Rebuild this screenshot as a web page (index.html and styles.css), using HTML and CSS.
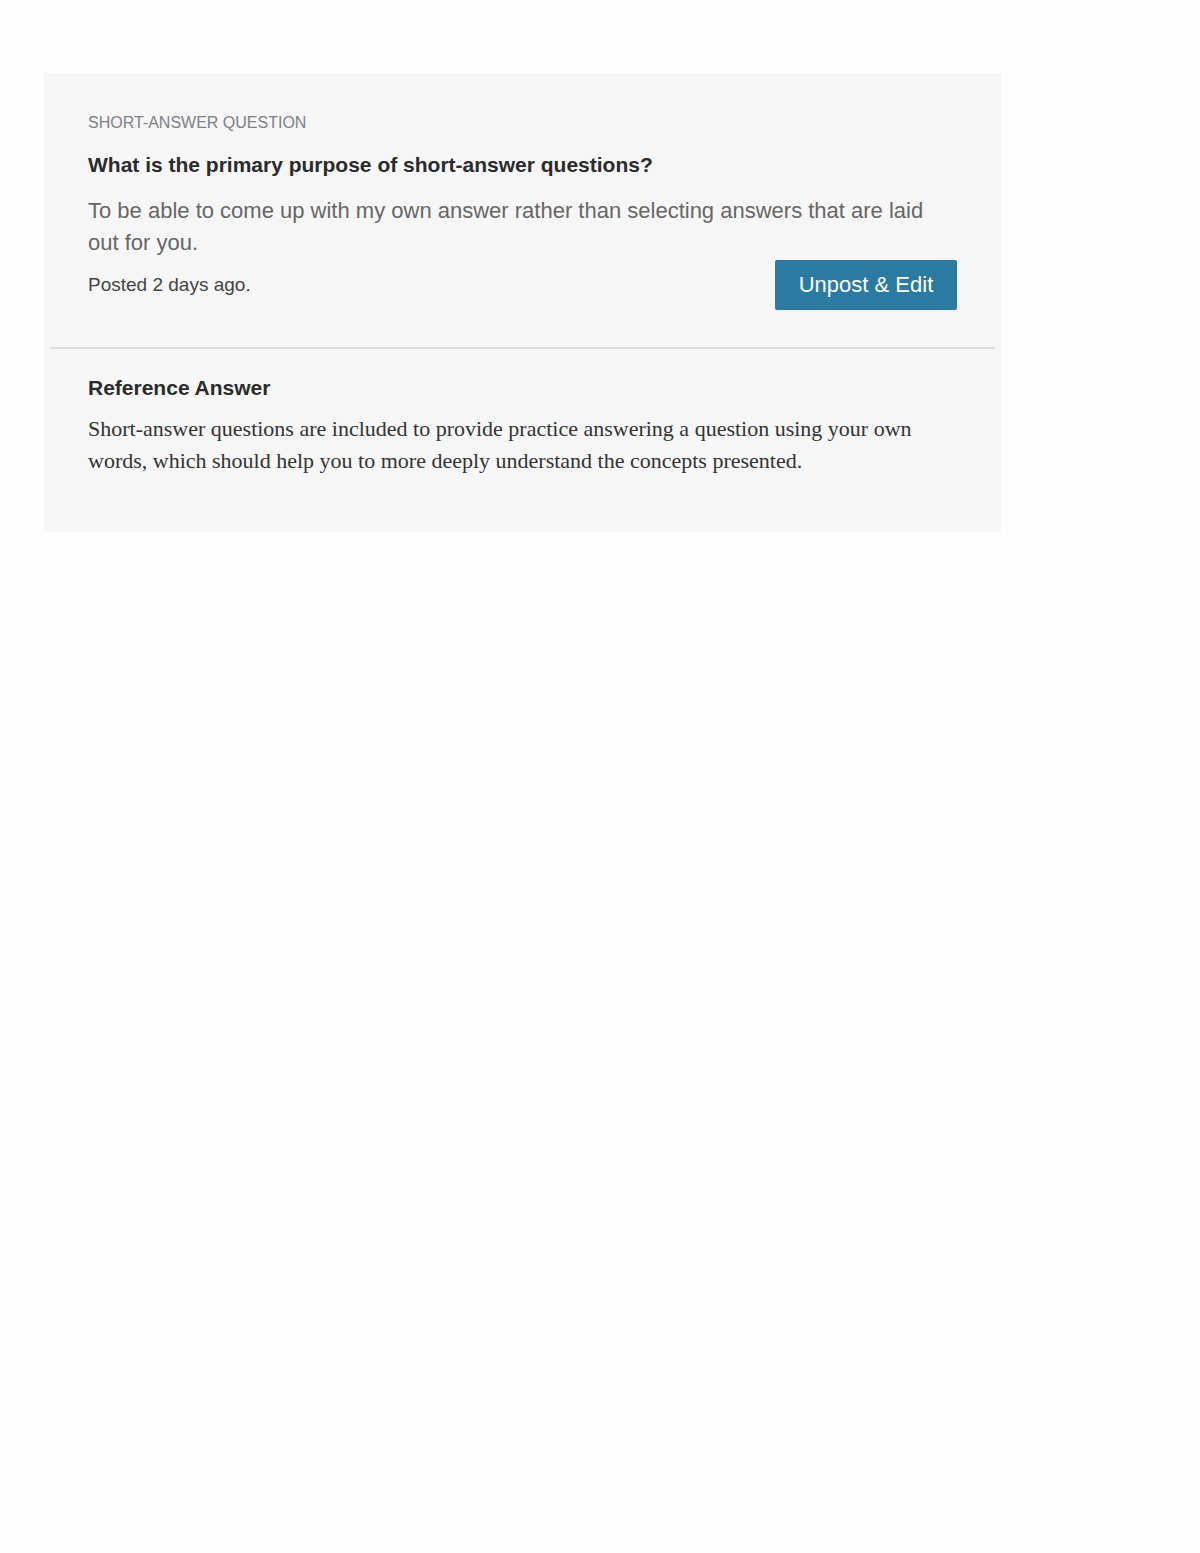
FILE: index.html
```html
<html lang="en">
<head>
	<meta charset="UTF-8">
	<meta name="viewport" content="width=device-width, initial-scale=1.0">
	<title>short-answer question</title>
	<link rel="stylesheet" href="styles.css">
</head>
<body>
	<div class="card">
		<div class="question">
			<p class="kind">SHORT-ANSWER QUESTION</p>
			<h2 class="prompt">What is the primary purpose of short-answer questions?</h2>
			<p class="answer">To be able to come up with my own answer rather than selecting answers that are laid out for you.</p>
			<div class="footer">
				<p class="posted">Posted 2 days ago.</p>
				<button class="unpost">Unpost &amp; Edit</button>
			</div>
		</div>
		<hr class="divider">
		<div class="reference">
			<h3>Reference Answer</h3>
			<p>Short-answer questions are included to provide practice answering a question using your own words, which should help you to more deeply understand the concepts presented.</p>
		</div>
	</div>
</body>
</html>
```

FILE: styles.css
```css
*{
	margin: 0;
	padding: 0;
	outline: 0;
}
body{
	background-color: #fdfdfd;
	font-family: "Liberation Sans", Arial, sans-serif;
}
.card{
	width: 957px;
	margin: 73px 0 0 44px;
	background-color: #f6f6f6;
	padding-bottom: 55px;
}
.question{
	padding: 40px 44px 0 44px;
}
.kind{
	font-size: 16px;
	line-height: 20px;
	color: #7c8088;
}
.prompt{
	margin-top: 20px;
	font-size: 21px;
	line-height: 24px;
	font-weight: bold;
	color: #2b2b2b;
}
.answer{
	margin-top: 18px;
	font-size: 22px;
	line-height: 32px;
	color: #666;
}
.footer{
	display: flex;
	justify-content: space-between;
	align-items: flex-start;
	padding-bottom: 37px;
}
.posted{
	margin-top: 14px;
	font-size: 19px;
	line-height: 24px;
	color: #444;
}
.unpost{
	width: 182px;
	height: 50px;
	margin-top: 1px;
	background-color: #2b7aa1;
	color: #fff;
	border: none;
	border-radius: 2px;
	font-family: "Liberation Sans", Arial, sans-serif;
	font-size: 22px;
	cursor: pointer;
}
.divider{
	margin: 0 6px;
	border: none;
	height: 2px;
	background-color: #dcdcdc;
}
.reference{
	padding: 27px 44px 0 44px;
}
.reference h3{
	font-size: 21px;
	line-height: 24px;
	font-weight: bold;
	color: #2b2b2b;
}
.reference p{
	margin-top: 13px;
	font-family: "Liberation Serif", "Times New Roman", serif;
	font-size: 22px;
	line-height: 32px;
	color: #333;
}
```
